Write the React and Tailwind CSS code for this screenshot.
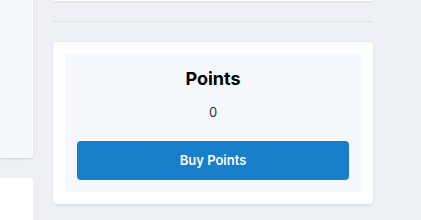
import React from "react";

export default function App() {
  return (
    <div
      className="w-[421px] h-[220px] overflow-hidden bg-[#edf0f4] flex gap-5"
      style={{ fontFamily: "Inter, 'Noto Sans', sans-serif" }}
    >
      <div className="w-[33px] flex flex-col gap-5 shrink-0">
        <div className="h-[158px] bg-white rounded-br shadow-sm">
          <div className="h-full bg-[#f5f9fd] mr-px"></div>
        </div>
        <div className="flex-1 bg-white rounded-tr"></div>
      </div>
      <div className="w-[320px] flex flex-col">
        <div className="h-[2px] -mt-px bg-white rounded-b shadow-sm"></div>
        <div className="mt-5 border-t border-[#dde1e6]"></div>
        <div className="mt-5 bg-white rounded shadow-[0_1px_3px_rgba(0,0,0,0.1)] p-3">
          <div className="bg-[#f5f9fd] px-3 pt-3 pb-3 flex flex-col items-center">
            <h2 className="text-[18px] leading-6 font-bold text-black mt-[1px]">Points</h2>
            <div className="text-[13px] text-[#333] mt-[11px] leading-5">0</div>
            <button className="mt-[19px] w-full h-[39px] rounded bg-[#177ec9] text-white text-[13px] font-semibold">
              Buy Points
            </button>
          </div>
        </div>
      </div>
    </div>
  );
}
